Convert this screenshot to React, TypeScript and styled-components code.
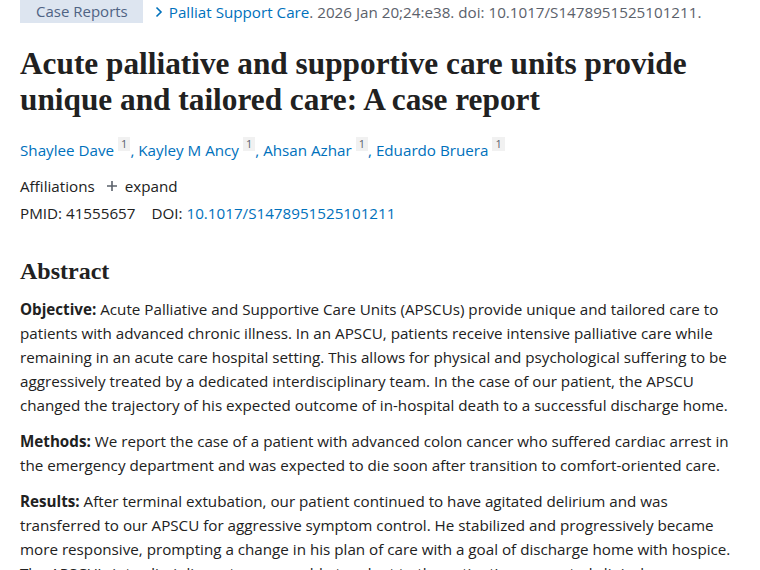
import styled, { createGlobalStyle } from 'styled-components';

const GlobalStyle = createGlobalStyle`
  html, body {
    margin: 0;
    padding: 0;
    background: #fff;
  }
  body {
    font-family: 'Open Sans', 'Noto Sans', sans-serif;
    color: #212121;
    overflow: hidden;
  }
`;

const Page = styled.main`
  padding: 0 20px;
  width: 720px;
  font-size: 15.2px;
  line-height: 24px;
`;

const HeaderRow = styled.div`
  display: flex;
  align-items: center;
  gap: 12px;
  height: 24px;
`;

const TypeBadge = styled.span`
  display: inline-block;
  background: #dde5f0;
  color: #4f6384;
  padding: 0 15px 0 16px;
  height: 24px;
  line-height: 24px;
  margin-top: -3px;
  font-size: 15px;
`;

const Citation = styled.span`
  display: flex;
  align-items: center;
  gap: 6px;
  color: #5b616b;
  white-space: nowrap;

  a {
    color: #0071bc;
    text-decoration: none;
  }
`;

const Title = styled.h1`
  font-family: 'Liberation Serif', 'Times New Roman', serif;
  font-weight: 700;
  font-size: 31.3px;
  line-height: 36px;
  color: #212121;
  margin: 22px 0 20px;
`;

const Authors = styled.div`
  color: #0071bc;
  margin-bottom: 10px;

  a {
    color: #0071bc;
    text-decoration: none;
  }
`;

const Sup = styled.sup`
  display: inline-block;
  background: #f1f1f1;
  color: #5b616b;
  font-size: 11px;
  line-height: 14px;
  padding: 0 3px;
  margin-left: 4px;
  vertical-align: top;
  margin-top: -1px;
`;

const MetaLine = styled.div<{ $gap?: number }>`
  display: flex;
  align-items: center;
  gap: ${(p) => p.$gap ?? 8}px;
  height: 27px;
`;

const Expand = styled.span`
  display: inline-flex;
  align-items: center;
  gap: 7px;
  color: #212121;
`;

const DoiLink = styled.a`
  color: #0071bc;
  text-decoration: none;
`;

const SectionTitle = styled.h2`
  font-family: 'Liberation Serif', 'Times New Roman', serif;
  font-weight: 700;
  font-size: 24px;
  line-height: 30px;
  margin: 30px 0 11px;
  color: #212121;
`;

const Para = styled.p`
  margin: 0 0 12px;

  b {
    font-weight: 700;
  }
`;

const PlusIcon = () => (
  <svg width="12" height="12" viewBox="0 0 12 12" aria-hidden>
    <path d="M6 1v10M1 6h10" stroke="#5b616b" strokeWidth="1.6" />
  </svg>
);

const Chevron = () => (
  <svg width="8" height="12" viewBox="0 0 8 12" aria-hidden>
    <path d="M1.5 1.5 6 6l-4.5 4.5" stroke="#0071bc" strokeWidth="1.6" fill="none" />
  </svg>
);

const authors = ['Shaylee Dave', 'Kayley M Ancy', 'Ahsan Azhar', 'Eduardo Bruera'];

export default function App() {
  return (
    <>
      <GlobalStyle />
      <Page>
        <HeaderRow>
          <TypeBadge>Case Reports</TypeBadge>
          <Citation>
            <Chevron />
            <span>
              <a href="#">Palliat Support Care</a>. 2026 Jan 20;24:e38. doi:
              10.1017/S1478951525101211.
            </span>
          </Citation>
        </HeaderRow>

        <Title>
          Acute palliative and supportive care units provide unique and
          tailored care: A case report
        </Title>

        <Authors>
          {authors.map((name, i) => (
            <span key={name}>
              <a href="#">{name}</a>
              <Sup>1</Sup>
              {i < authors.length - 1 ? ', ' : ''}
            </span>
          ))}
        </Authors>

        <MetaLine $gap={11}>
          <span>Affiliations</span>
          <Expand>
            <PlusIcon />
            expand
          </Expand>
        </MetaLine>
        <MetaLine $gap={16}>
          <span>PMID: 41555657</span>
          <span>
            DOI: <DoiLink href="#">10.1017/S1478951525101211</DoiLink>
          </span>
        </MetaLine>

        <SectionTitle>Abstract</SectionTitle>

        <Para>
          <b>Objective:</b> Acute Palliative and Supportive Care Units (APSCUs)
          provide unique and tailored care to patients with advanced chronic
          illness. In an APSCU, patients receive intensive palliative care while
          remaining in an acute care hospital setting. This allows for physical
          and psychological suffering to be aggressively treated by a dedicated
          interdisciplinary team. In the case of our patient, the APSCU changed
          the trajectory of his expected outcome of in-hospital death to a
          successful discharge home.
        </Para>
        <Para>
          <b>Methods:</b> We report the case of a patient with advanced colon
          cancer who suffered cardiac arrest in the emergency department and was
          expected to die soon after transition to comfort-oriented care.
        </Para>
        <Para>
          <b>Results:</b> After terminal extubation, our patient continued to
          have agitated delirium and was transferred to our APSCU for aggressive
          symptom control. He stabilized and progressively became more
          responsive, prompting a change in his plan of care with a goal of
          discharge home with hospice. The APSCU's interdisciplinary team was
          able to adapt to the patient's unexpected clinical improvement.
        </Para>
      </Page>
    </>
  );
}
